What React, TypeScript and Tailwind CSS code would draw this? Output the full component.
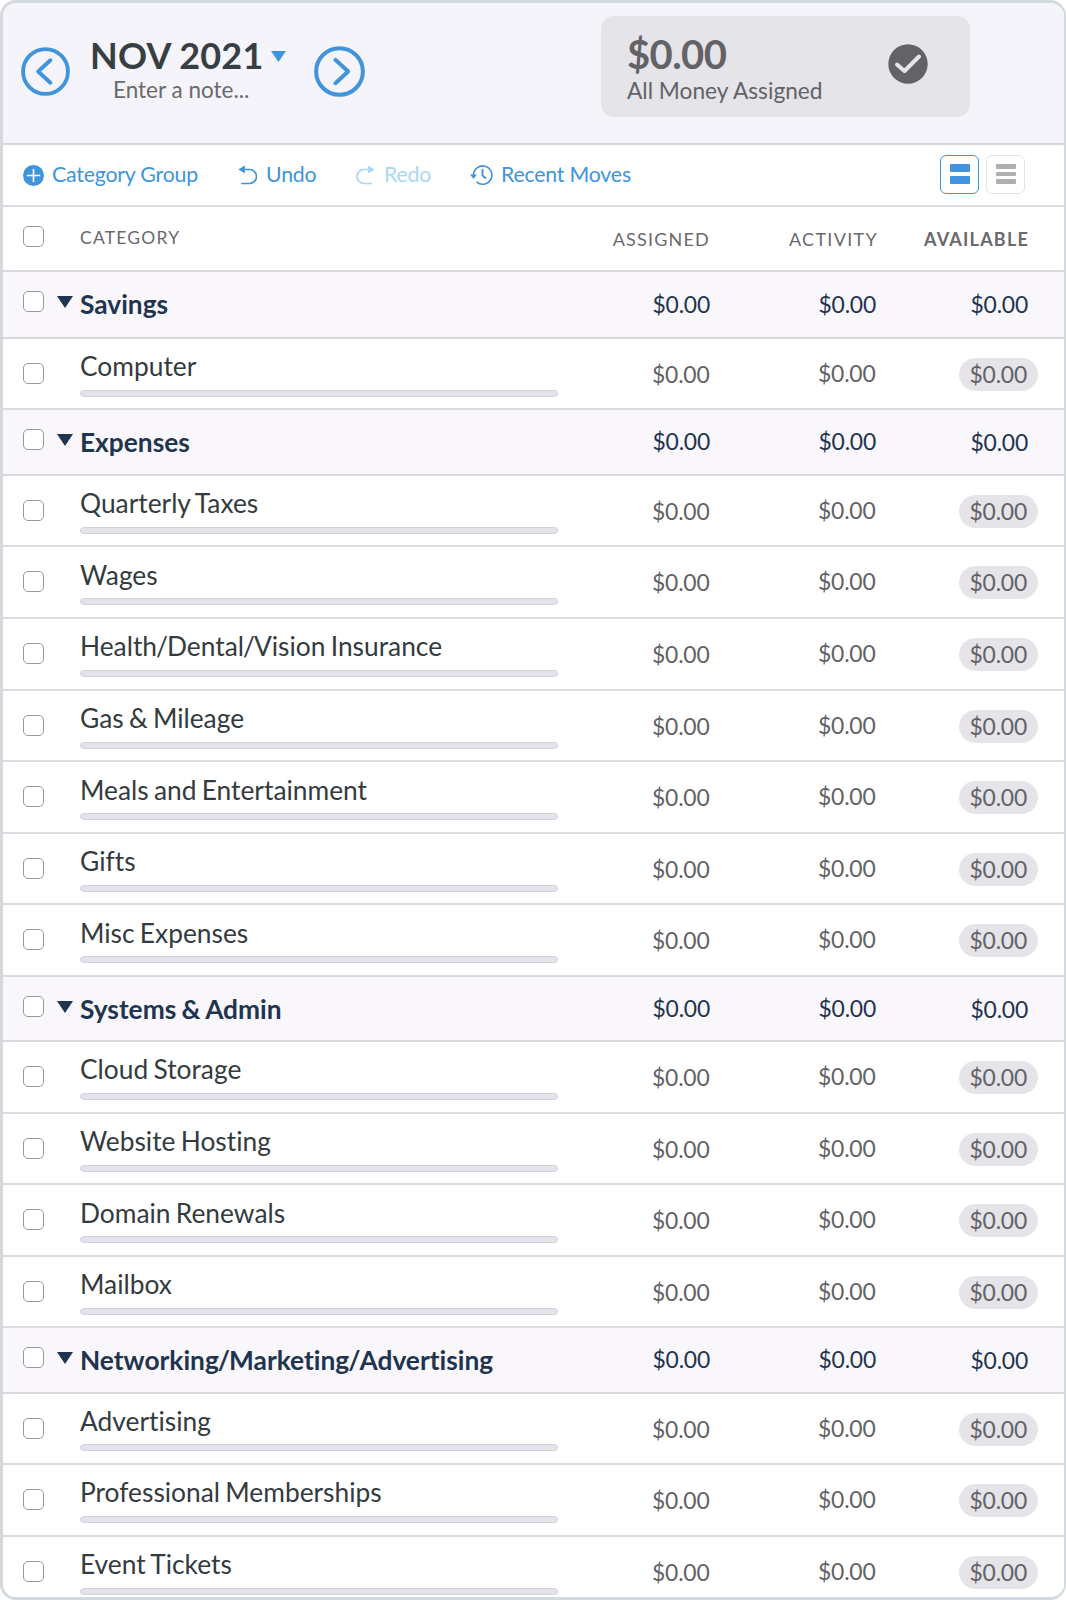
import { FC, Fragment, ReactNode } from "react";

type Group = {
  name: string;
  height: string;
  amountTop: string;
  items: string[];
};

const groups: Group[] = [
  {
    name: "Savings",
    height: "h-[66.6px]",
    amountTop: "mt-[18px]",
    items: ["Computer"],
  },
  {
    name: "Expenses",
    height: "h-[65.6px]",
    amountTop: "mt-[17px]",
    items: [
      "Quarterly Taxes",
      "Wages",
      "Health/Dental/Vision Insurance",
      "Gas & Mileage",
      "Meals and Entertainment",
      "Gifts",
      "Misc Expenses",
    ],
  },
  {
    name: "Systems & Admin",
    height: "h-[65.1px]",
    amountTop: "mt-[17px]",
    items: ["Cloud Storage", "Website Hosting", "Domain Renewals", "Mailbox"],
  },
  {
    name: "Networking/Marketing/Advertising",
    height: "h-[65.1px]",
    amountTop: "mt-[17px]",
    items: ["Advertising", "Professional Memberships", "Event Tickets"],
  },
];

const Checkbox: FC = () => (
  <span className="block size-[21px] shrink-0 rounded-[5px] border-[1.5px] border-[#98989c] bg-white" />
);

// Slashes sit tight between the words they join
const Name: FC<{ text: string }> = ({ text }) => (
  <>
    {text.split("/").map((part, i) => (
      <Fragment key={part}>
        {i > 0 && <span className="-mx-px">/</span>}
        {part}
      </Fragment>
    ))}
  </>
);

const Chevron: FC<{ className: string; d: string }> = ({ className, d }) => (
  <svg className={className} viewBox="0 0 50 50" fill="none" stroke="#3f94dc">
    <circle cx="25" cy="25" r="22.9" strokeWidth="3.9" />
    <path d={d} strokeWidth="3.9" strokeLinecap="round" strokeLinejoin="round" />
  </svg>
);

const ToolbarItem: FC<{ className: string; children: ReactNode }> = ({
  className,
  children,
}) => (
  <div className={`flex items-center whitespace-nowrap ${className}`}>
    {children}
  </div>
);

const Header: FC = () => (
  <header className="flex h-[142px] shrink-0 items-start border-b-2 border-[#d5d8dc] bg-[#f5f4fa] pl-[18px]">
    <Chevron className="mt-[44px] size-[49px]" d="M30 13.5 L17.5 25 L30 36.5" />
    <div className="ml-[20px] mt-[29px] w-[200px]">
      <div className="flex items-center">
        <h1 className="text-[36px] font-bold leading-[46px] tracking-[0.2px] text-[#373f43]">
          NOV 2021
        </h1>
        <svg className="ml-[7px] mt-[3px] h-[11px] w-[15px]" viewBox="0 0 15 11" fill="#3f94dc">
          <path d="M0 0h15L7.5 11z" />
        </svg>
      </div>
      <p className="-mt-[2px] ml-[23px] text-[22.5px] leading-7 text-[#6a696d]">
        Enter a note...
      </p>
    </div>
    <Chevron className="ml-[24px] mt-[43px] size-[51px]" d="M21 13.5 L33.5 25 L21 36.5" />
    <div className="ml-[236px] mt-[13px] flex h-[101px] w-[369px] items-start justify-between rounded-[13px] bg-[#e5e4e9] pl-[26px] pr-[42px]">
      <div>
        <p className="mt-[16px] text-[40px] font-bold leading-[44px] tracking-[-0.6px] text-[#636266]">
          $0.00
        </p>
        <p className="mt-px text-[22.7px] leading-7 text-[#636266]">
          All Money Assigned
        </p>
      </div>
      <svg className="mt-[28px] size-[40px]" viewBox="0 0 40 40" fill="none">
        <circle cx="20" cy="20" r="19.7" fill="#636266" />
        <path d="M9 20.5 L16.5 27 L31 12.5" stroke="#e5e4e9" strokeWidth="4" strokeLinecap="round" strokeLinejoin="round" />
      </svg>
    </div>
  </header>
);

const Toolbar: FC = () => (
  <nav className="flex h-[62px] shrink-0 items-center border-b-2 border-[#dbdcdf] pl-5 text-[21.3px] tracking-[-0.2px] text-[#3f94dc]">
    <ToolbarItem className="w-[215px]">
      <svg className="mr-2 size-[21px]" viewBox="0 0 21 21">
        <circle cx="10.5" cy="10.5" r="10.5" fill="#3f94dc" />
        <path d="M10.5 4.5v12M4.5 10.5h12" stroke="#fff" strokeWidth="1.7" strokeLinecap="round" />
      </svg>
      Category Group
    </ToolbarItem>
    <ToolbarItem className="w-[117px]">
      <svg className="mr-[9px] h-[20px] w-[19px]" viewBox="0 0 19 20" fill="none" stroke="currentColor" strokeWidth="1.7">
        <path d="M4 4.5h7.5a6.9 6.9 0 0 1 0 14H4" strokeLinecap="round" />
        <path d="M2 4.5l4-2.5v5z" fill="currentColor" />
      </svg>
      Undo
    </ToolbarItem>
    <ToolbarItem className="w-[115px] text-[#a8d8f2]">
      <svg className="mr-[10px] h-[20px] w-[19px]" viewBox="0 0 19 20" fill="none" stroke="currentColor" strokeWidth="1.7">
        <path d="M15.5 4.5H9a6.9 6.9 0 0 0 0 14h7" strokeLinecap="round" />
        <path d="M18 4.5l-4-2.500v5z" fill="currentColor" />
      </svg>
      Redo
    </ToolbarItem>
    <ToolbarItem className="w-[470px]">
      <svg className="mr-2 h-[22px] w-[23px]" viewBox="0 0 23 22" fill="none" stroke="currentColor" strokeWidth="1.6">
        <path d="M3.5 11a9.2 9.2 0 1 1 3 6.9" />
        <path d="M12.5 5v6.5l3.5 3" strokeWidth="1.9" />
        <path d="M0 10.5h7l-3.5 4.5z" fill="currentColor" stroke="none" />
      </svg>
      Recent Moves
    </ToolbarItem>
    <div className="mb-[2px] flex gap-[7px]">
      <span className="flex size-[39px] flex-col items-center justify-center gap-1 rounded-md border-[1.5px] border-[#3f94dc]">
        <i className="h-2 w-[20px] rounded-[1px] bg-[#3f94dc]" />
        <i className="h-2 w-[20px] rounded-[1px] bg-[#3f94dc]" />
      </span>
      <span className="flex size-[39px] flex-col items-center justify-center gap-[3px] rounded-md border-[1.5px] border-[#e5e5e7]">
        <i className="h-[5px] w-[20px] rounded-[1px] bg-[#afafb1]" />
        <i className="h-[4px] w-[20px] rounded-[1px] bg-[#afafb1]" />
        <i className="h-[5px] w-[20px] rounded-[1px] bg-[#afafb1]" />
      </span>
    </div>
  </nav>
);

const TableHead: FC = () => (
  <div className="flex h-[65px] shrink-0 items-start border-b-2 border-[#d8d9dc] pl-5 text-[18px] leading-6 tracking-[1.2px] text-[#6a696d]">
    <div className="mt-[19px]">
      <Checkbox />
    </div>
    <div className="ml-[36px] mt-[19px] w-[480px] text-[17.5px]">CATEGORY</div>
    <div className="mt-[20px] w-[150px] text-right">ASSIGNED</div>
    <div className="mt-[20px] w-[168px] text-right tracking-[1.3px]">ACTIVITY</div>
    <div className="mt-[20px] w-[151px] text-right font-bold">AVAILABLE</div>
  </div>
);

const GroupRow: FC<{ group: Group }> = ({ group }) => (
  <div
    className={`flex items-start border-b-2 border-[#d8d9dd] bg-[#f9f7fb] pl-5 text-[22.9px] leading-7 tracking-[-0.2px] text-[#1f344f] ${group.height}`}
  >
    <div className="mt-[19px]">
      <Checkbox />
    </div>
    <svg className="ml-[12.5px] mr-[7.5px] mt-[24px] h-3 w-4" viewBox="0 0 16 12" fill="#1f344f">
      <path d="M0 0h16L8 12z" />
    </svg>
    <h2 className="mt-[16px] w-[480px] text-[26.3px] font-bold leading-8 tracking-normal [font-variant-ligatures:none] [word-spacing:-1px]">
      <Name text={group.name} />
    </h2>
    <div className={`w-[150px] text-right ${group.amountTop}`}>$0.00</div>
    <div className={`w-[166px] text-right ${group.amountTop}`}>$0.00</div>
    <div className="mt-[18px] w-[152px] text-right">$0.00</div>
  </div>
);

const CategoryRow: FC<{ name: string }> = ({ name }) => (
  <div className="flex h-[71.6px] items-start border-b-2 border-[#dbdcdf] bg-white pl-5 text-[22.9px] leading-7 tracking-[-0.2px] text-[#636266]">
    <div className="mt-[24px]">
      <Checkbox />
    </div>
    <div className="ml-[36px] w-[479.5px]">
      <div className="mt-[11.4px] text-[26.35px] leading-8 tracking-normal text-[#343b3f] [font-variant-ligatures:none] [word-spacing:-1.5px]">
        <Name text={name} />
      </div>
      <div className="mt-[7.6px] h-[7px] w-[478px] rounded-full border-[1.5px] border-[#d3d2d8] bg-[#e4e3e9]" />
    </div>
    <div className="mt-[21px] w-[150px] text-right">$0.00</div>
    <div className="mt-[20px] w-[166px] text-right">$0.00</div>
    <div className="ml-[83px] mt-[19px] h-[33px] w-[79.5px] rounded-full bg-[#e5e4e9] text-center leading-[33px]">
      $0.00
    </div>
  </div>
);

export default function App() {
  return (
    <div className="bg-white font-['Lato',sans-serif]">
      <main className="flex h-[1600px] w-[1066px] flex-col overflow-hidden rounded-[16px] border-[3px] border-r-2 border-[#d3d9dc] bg-white">
        <Header />
        <Toolbar />
        <TableHead />
        {groups.map((group) => (
          <section key={group.name} className="shrink-0">
            <GroupRow group={group} />
            {group.items.map((item) => (
              <CategoryRow key={item} name={item} />
            ))}
          </section>
        ))}
      </main>
    </div>
  );
}
